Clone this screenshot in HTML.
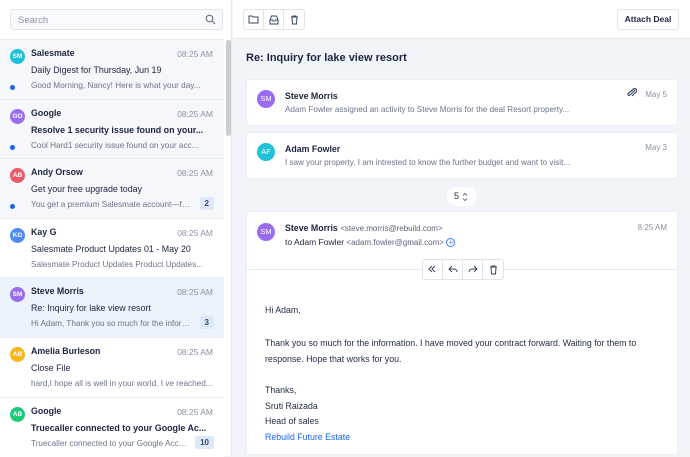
<!DOCTYPE html><html><head><style>
*{box-sizing:border-box;margin:0;padding:0}
body{width:690px;height:456px;overflow:hidden;font-family:"Liberation Sans",sans-serif;background:#f1f4f9;position:relative;color:#1f2a44}
.a{position:absolute}
#left{left:0;top:0;width:232px;height:456px;background:#fff;border-right:1px solid #e3e7ee}
.search{left:10px;top:9px;width:213px;height:21px;border:1px solid #dfe3ea;border-radius:3px;background:#f7f9fc;font-size:9.5px;color:#8a93a5;padding:5px 7px}
.row{left:0;width:224px;height:60px;border-top:1px solid #e9edf3}
.av{left:10px;top:9px;width:15px;height:15px;border-radius:50%;color:#fff;font-size:6.5px;font-weight:bold;text-align:center;line-height:15px}
.nm{left:31px;top:8px;font-size:8.8px;font-weight:bold;color:#1c2540}
.tm{right:11px;top:9px;font-size:8.5px;color:#8a93a5}
.sb{left:31px;top:25px;font-size:8.9px;color:#1c2540;white-space:nowrap}
.pv{left:31px;top:41px;font-size:8.2px;color:#6b7489;white-space:nowrap;width:183px;overflow:hidden;text-overflow:ellipsis}
.dot{left:10px;top:45px;width:5px;height:5px;border-radius:50%;background:#1a5ff0}
.cnt{right:10px;top:38px;background:#dce9fb;color:#3a4660;font-size:8px;font-weight:bold;padding:2px 5px;border-radius:2px}
#tb{left:233px;top:0;width:457px;height:39px;background:#fff;border-bottom:1px solid #e6e9ef}
.btns{left:10px;top:9px;height:21px;border:1px solid #dfe3ea;border-radius:3px;display:flex}
.btns div{width:20px;height:19px;border-right:1px solid #dfe3ea;display:flex;align-items:center;justify-content:center}
.btns div:last-child{border-right:none}
.card{background:#fff;border-radius:2px;left:247px;width:430px;box-shadow:0 0 0 1px #eaedf2}
.cav{left:10px;width:18px;height:18px;border-radius:50%;color:#fff;font-size:7.5px;text-align:center;line-height:18px}
.cn{left:38px;font-size:8.8px;font-weight:bold;color:#1c2540}
.cp{left:38px;font-size:8.1px;color:#6b7489;white-space:nowrap}
.cd{right:10px;font-size:8px;color:#8a93a5}
.body{left:18px;font-size:8.8px;color:#1f2a44}
</style></head><body>
<div id="left" class="a">
<div class="a search">Search<svg class="a" style="right:6px;top:4px" width="11" height="11" viewBox="0 0 11 11"><circle cx="4.5" cy="4.5" r="3.3" fill="none" stroke="#6b7489" stroke-width="1.2"/><path d="M7 7l3 3" stroke="#6b7489" stroke-width="1.2"/></svg></div>
<div class="a" style="left:226px;top:40px;width:5px;height:96px;background:#c9cdd4;border-radius:3px"></div>

<div class="a row" style="top:39px;background:#f5f7fb"><div class="a av" style="background:#1fc1d6">SM</div><div class="a nm">Salesmate</div><div class="a tm">08:25 AM</div><div class="a sb">Daily Digest for Thursday, Jun 19</div><div class="a pv">Good Morning, Nancy! Here is what your day...</div><div class="a dot"></div></div>
<div class="a row" style="top:99px;background:#f5f7fb"><div class="a av" style="background:#9a6cf2">GO</div><div class="a nm">Google</div><div class="a tm">08:25 AM</div><div class="a sb" style="font-weight:bold">Resolve 1 security issue found on your...</div><div class="a pv">Cool Hard1 security issue found on your acc...</div><div class="a dot"></div></div>
<div class="a row" style="top:158px;background:#f5f7fb"><div class="a av" style="background:#ea5b6a">AB</div><div class="a nm">Andy Orsow</div><div class="a tm">08:25 AM</div><div class="a sb">Get your free upgrade today</div><div class="a pv" style="width:160px">You get a premium Salesmate account—free...</div><div class="a dot"></div><div class="a cnt">2</div></div>
<div class="a row" style="top:218px;background:#fff"><div class="a av" style="background:#4f8af5">KG</div><div class="a nm">Kay G</div><div class="a tm">08:25 AM</div><div class="a sb">Salesmate Product Updates 01 - May 20</div><div class="a pv">Salesmate Product Updates Product Updates...</div></div>
<div class="a row" style="top:277px;background:#edf3fc"><div class="a av" style="background:#9a6cf2">SM</div><div class="a nm">Steve Morris</div><div class="a tm">08:25 AM</div><div class="a sb">Re: Inquiry for lake view resort</div><div class="a pv" style="width:163px">Hi Adam, Thank you so much for the information</div><div class="a cnt">3</div></div>
<div class="a row" style="top:337px;background:#fff"><div class="a av" style="background:#fbb616">AB</div><div class="a nm">Amelia Burleson</div><div class="a tm">08:25 AM</div><div class="a sb">Close File</div><div class="a pv">hard,I hope all is well in your world. I ve reached...</div></div>
<div class="a row" style="top:397px;background:#fff"><div class="a av" style="background:#1fc97a">AB</div><div class="a nm">Google</div><div class="a tm">08:25 AM</div><div class="a sb" style="font-weight:bold">Truecaller connected to your Google Ac...</div><div class="a pv" style="width:160px">Truecaller connected to your Google Account</div><div class="a cnt">10</div></div>
</div>

<div id="tb" class="a">
<div class="a btns">
<div><svg width="11" height="10" viewBox="0 0 11 10"><path d="M1 1h3l1 1h5v6H1z" fill="none" stroke="#3a4660" stroke-width="1"/></svg></div>
<div><svg width="10" height="10" viewBox="0 0 10 10"><path d="M1 5l1.5-4h5L9 5v4H1z M1 5h2.5l.5 1h2l.5-1H9" fill="none" stroke="#3a4660" stroke-width="1"/></svg></div>
<div><svg width="9" height="10" viewBox="0 0 9 10"><path d="M1 2h7M3 2V1h3v1M2 2l.5 7h4L7 2" fill="none" stroke="#3a4660" stroke-width="1"/></svg></div>
</div>
<div class="a" style="right:11px;top:9px;width:62px;height:21px;border:1px solid #dfe3ea;border-radius:3px;font-size:8.5px;font-weight:bold;color:#1c2540;text-align:center;line-height:19px">Attach Deal</div>
</div>

<div class="a" style="left:246px;top:52px;font-size:11px;font-weight:bold;color:#1c2540">Re: Inquiry for lake view resort</div>

<div class="a card" style="top:80px;height:45px"><div class="a cav" style="top:10px;background:#9a6cf2">SM</div><div class="a cn" style="top:11px">Steve Morris</div><div class="a cp" style="top:25px">Adam Fowler assigned an activity to Steve Morris for the deal Resort property...</div><div class="a cd" style="top:10px">May 5</div><svg class="a" style="left:380px;top:8px" width="10" height="10" viewBox="0 0 10 10"><path d="M8 2L3 7a1.2 1.2 0 0 1-1.7-1.7L6.5 1a2 2 0 0 1 2.8 2.8L5 8" fill="none" stroke="#3a4660" stroke-width="1.2"/></svg></div>
<div class="a card" style="top:133px;height:45px"><div class="a cav" style="top:10px;background:#1fc1d6">AF</div><div class="a cn" style="top:11px">Adam Fowler</div><div class="a cp" style="top:25px">I saw your property. I am intrested to know the further budget and want to visit...</div><div class="a cd" style="top:10px">May 3</div></div>

<div class="a" style="left:447px;top:187px;width:30px;height:19px;background:#fff;border-radius:10px;font-size:9px;padding:4px 0 0 7px">5<svg style="position:absolute;left:15px;top:5px" width="6" height="10" viewBox="0 0 6 10"><path d="M1 3.5L3 1.5L5 3.5M1 6.5L3 8.5L5 6.5" fill="none" stroke="#6b7489" stroke-width="1"/></svg></div>

<div class="a card" style="top:212px;height:242px">
<div class="a cav" style="top:11px;background:#9a6cf2">SM</div>
<div class="a cn" style="top:11px">Steve Morris <span style="font-weight:normal;font-size:8px;color:#5a6379">&lt;steve.morris@rebuild.com&gt;</span></div>
<div class="a" style="left:38px;top:25px;font-size:8.5px;color:#1c2540">to Adam Fowler <span style="font-size:8px;color:#5a6379">&lt;adam.fowler@gmail.com&gt;</span> <span style="display:inline-block;width:9px;height:9px;border:1px solid #3b7cf0;border-radius:50%;color:#3b7cf0;font-size:8px;line-height:7px;text-align:center;vertical-align:middle">+</span></div>
<div class="a cd" style="top:11px">8:25 AM</div>
<div class="a" style="left:0;top:57px;width:430px;height:1px;background:#e6e9ef"></div>
<div class="a btns" style="left:175px;top:47px;background:#fff">
<div><svg width="10" height="9" viewBox="0 0 10 9"><path d="M4 1L1 4l3 3M7 1L4 4l3 3" fill="none" stroke="#3a4660" stroke-width="1"/></svg></div>
<div><svg width="10" height="9" viewBox="0 0 10 9"><path d="M4 1L1 4l3 3M1 4h5a3 3 0 0 1 3 3" fill="none" stroke="#3a4660" stroke-width="1"/></svg></div>
<div><svg width="10" height="9" viewBox="0 0 10 9"><path d="M6 1l3 3-3 3M9 4H4a3 3 0 0 0-3 3" fill="none" stroke="#3a4660" stroke-width="1"/></svg></div>
<div><svg width="9" height="10" viewBox="0 0 9 10"><path d="M1 2h7M3 2V1h3v1M2 2l.5 7h4L7 2" fill="none" stroke="#3a4660" stroke-width="1"/></svg></div>
</div>
<div class="a body" style="top:93px">Hi Adam,</div>
<div class="a body" style="top:124px;line-height:15.5px;width:400px">Thank you so much for the information. I have moved your contract forward. Waiting for them to response. Hope that works for you.</div>
<div class="a body" style="top:171px;line-height:15.6px">Thanks,<br>Sruti Raizada<br>Head of sales<br><span style="color:#1a66f0">Rebuild Future Estate</span></div>
</div>
</body></html>
